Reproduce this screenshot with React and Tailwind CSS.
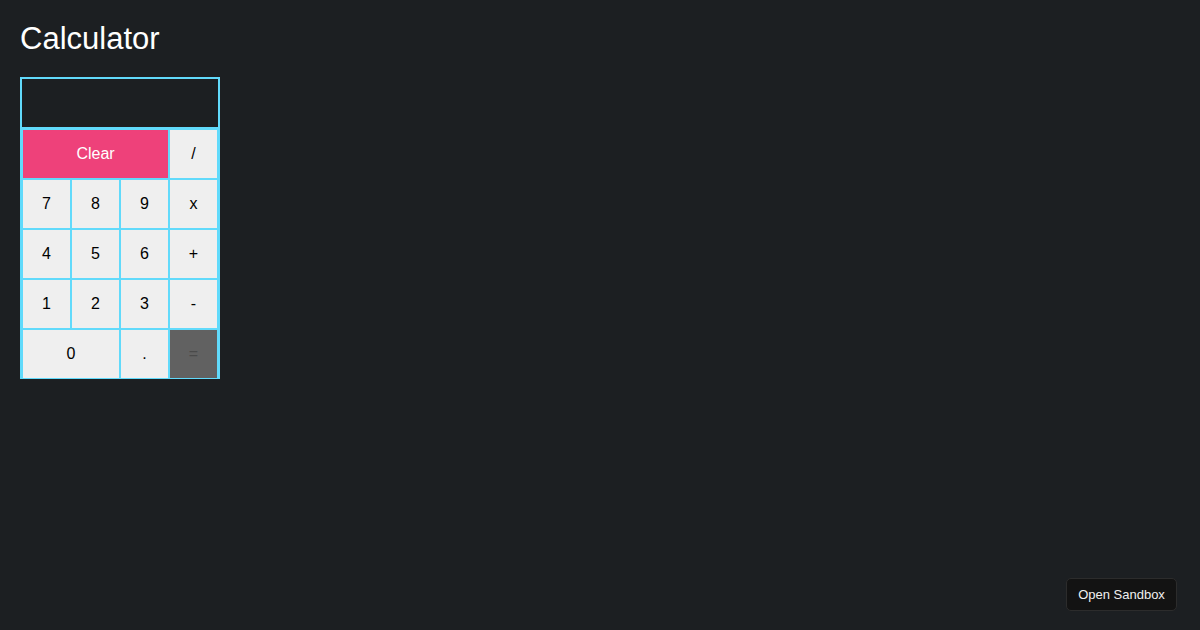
export default function App() {
  const btn = "h-[50px] border border-[#61dafb] bg-[#efefef] text-black text-[16px] flex items-center justify-center";
  return (
    <div className="relative min-h-[630px] w-full bg-[#1c1f22] p-[20px] font-['Liberation_Sans',Arial,sans-serif]">
      <h1 className="text-[31px] leading-[37px] text-white font-normal">Calculator</h1>
      <div className="mt-[20px] w-[200px] h-[302px] border-2 border-[#61dafb]">
        <div className="h-[50px] border-b-2 border-[#61dafb] bg-[#1c1f22]"></div>
        <div className="grid grid-cols-4">
          <div className="col-span-3 h-[50px] border border-[#61dafb] bg-[#ee417a] text-white text-[16px] flex items-center justify-center">Clear</div>
          <div className={btn}>/</div>
          <div className={btn}>7</div>
          <div className={btn}>8</div>
          <div className={btn}>9</div>
          <div className={btn}>x</div>
          <div className={btn}>4</div>
          <div className={btn}>5</div>
          <div className={btn}>6</div>
          <div className={btn}>+</div>
          <div className={btn}>1</div>
          <div className={btn}>2</div>
          <div className={btn}>3</div>
          <div className={btn}>-</div>
          <div className={"col-span-2 " + btn}>0</div>
          <div className={btn}>.</div>
          <div className="h-[50px] border border-[#61dafb] bg-[#616161] text-[#4a4a4a] text-[16px] flex items-center justify-center">=</div>
        </div>
      </div>
      <div className="absolute right-[23px] bottom-[19px] h-[33px] w-[111px] rounded-[5px] border border-[#2c2c2c] bg-[#131313] text-[13px] text-[#f0f0f0] flex items-center justify-center">
        Open Sandbox
      </div>
    </div>
  );
}
